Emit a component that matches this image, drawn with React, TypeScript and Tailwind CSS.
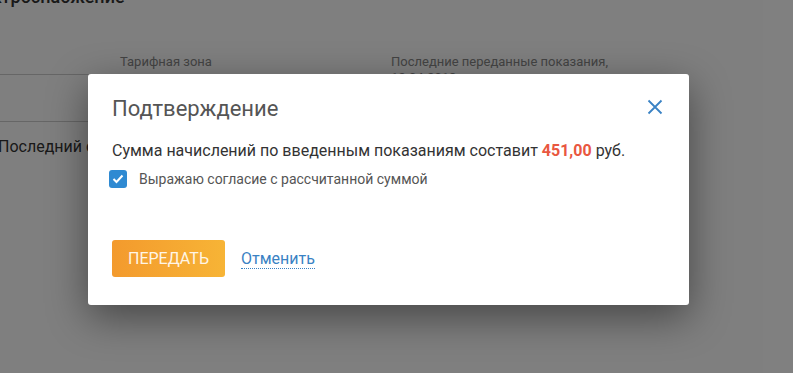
import React from "react";

export default function App() {
  return (
    <div className="relative h-[373px] w-[793px] overflow-hidden bg-white font-['Roboto',sans-serif]">
      {/* background page */}
      <div className="-ml-[40px] -mt-[16px]">
        <h1 className="text-[18px] leading-[26px] font-medium text-[#333]">Электроснабжение</h1>
      </div>
      <div className="mt-[44px] grid grid-cols-[120px_271px_1fr] text-[13px] leading-[16px] text-[#888]">
        <div />
        <div>Тарифная зона</div>
        <div className="w-[230px]">Последние переданные показания, 12.04.2018</div>
      </div>
      <div className="-mt-[12px] h-[48px] w-[140px] border-y border-[#ccc]" />
      <div className="mt-[15px] -ml-[2px] text-[16px] leading-[20px] text-[#333]">Последний счётчик</div>

      {/* overlay */}
      <div className="absolute inset-0 bg-black/50" />

      {/* modal */}
      <div className="absolute left-[88px] top-[74px] flex h-[231px] w-[601px] flex-col rounded-[3px] bg-white px-6 pt-[21px] shadow-[0_12px_40px_rgba(0,0,0,0.45)]">
        <div className="flex items-start justify-between">
          <h2 className="text-[22px] leading-[28px] text-[#555]">Подтверждение</h2>
          <button className="mr-[2px] mt-[4px] text-[#3a82c4]">
            <svg width="16" height="16" viewBox="0 0 16 16" fill="none" stroke="currentColor" strokeWidth="1.8">
              <path d="M1.5 1.5 L14.5 14.5 M14.5 1.5 L1.5 14.5" />
            </svg>
          </button>
        </div>
        <p className="mt-[18px] text-[16px] leading-[20px] text-[#333]">
          Сумма начислений по введенным показаниям составит{" "}
          <span className="font-bold text-[#e9573f]">451,00</span> руб.
        </p>
        <label className="mt-[9px] -ml-[3px] flex items-center gap-[12px] text-[14px] leading-[18px] text-[#555]">
          <span className="flex h-[18px] w-[18px] items-center justify-center rounded-[3px] bg-[#2f8ad2]">
            <svg width="12" height="10" viewBox="0 0 12 10" fill="none" stroke="white" strokeWidth="2">
              <path d="M1.5 5 L4.5 8 L10.5 1.5" />
            </svg>
          </span>
          Выражаю согласие с рассчитанной суммой
        </label>
        <div className="mt-[52px] flex items-center gap-[16px]">
          <button className="h-[37px] w-[113px] rounded-[3px] bg-gradient-to-r from-[#f39a2d] to-[#f7b436] text-[16px] uppercase text-[#fff5e6]">
            Передать
          </button>
          <a className="border-b border-dotted border-[#3a82c4] text-[16px] leading-[19px] text-[#3a82c4]">
            Отменить
          </a>
        </div>
      </div>
    </div>
  );
}
